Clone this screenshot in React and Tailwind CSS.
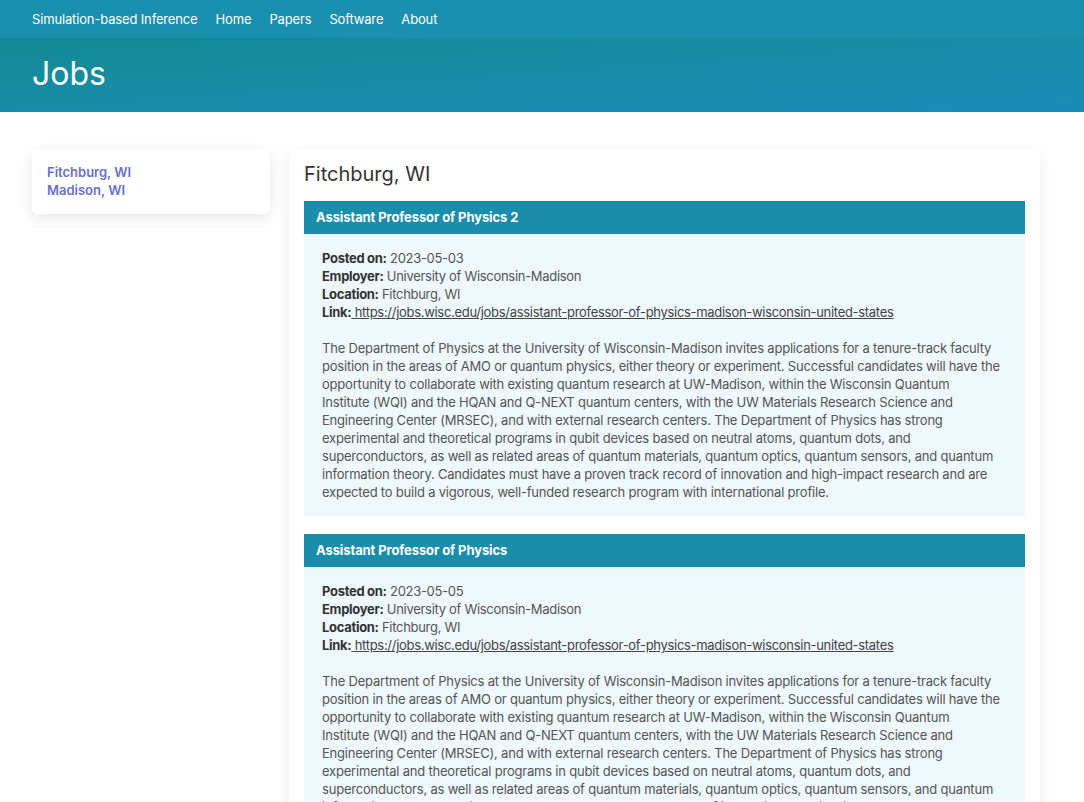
import React from 'react'

// line breaks follow the original page
const descriptionLines = [
    'The Department of Physics at the University of Wisconsin-Madison invites applications for a tenure-track faculty',
    'position in the areas of AMO or quantum physics, either theory or experiment. Successful candidates will have the',
    'opportunity to collaborate with existing quantum research at UW-Madison, within the Wisconsin Quantum',
    'Institute (WQI) and the HQAN and Q-NEXT quantum centers, with the UW Materials Research Science and',
    'Engineering Center (MRSEC), and with external research centers. The Department of Physics has strong',
    'experimental and theoretical programs in qubit devices based on neutral atoms, quantum dots, and',
    'superconductors, as well as related areas of quantum materials, quantum optics, quantum sensors, and quantum',
    'information theory. Candidates must have a proven track record of innovation and high-impact research and are',
    'expected to build a vigorous, well-funded research program with international profile.',
]

const jobs = [
    {
        title: 'Assistant Professor of Physics 2',
        posted: '2023-05-03',
        employer: 'University of Wisconsin-Madison',
        location: 'Fitchburg, WI',
        link: 'https://jobs.wisc.edu/jobs/assistant-professor-of-physics-madison-wisconsin-united-states',
    },
    {
        title: 'Assistant Professor of Physics',
        posted: '2023-05-05',
        employer: 'University of Wisconsin-Madison',
        location: 'Fitchburg, WI',
        link: 'https://jobs.wisc.edu/jobs/assistant-professor-of-physics-madison-wisconsin-united-states',
    },
]

function JobCard({ job }) {
    return (
        <div className="mb-[18px]">
            <div className="h-[33px] flex items-center px-3 bg-[#1a8dab] text-white text-[13px] font-bold tracking-[-0.1px]">
                {job.title}
            </div>
            <div className="bg-[#eef8fd] px-[18px] pt-[15px] pb-[15px] text-[13px] leading-[18px] text-[#555] tracking-[-0.3px]">
                <div>
                    <span className="font-bold text-[#333]">Posted on:</span> {job.posted}
                </div>
                <div>
                    <span className="font-bold text-[#333]">Employer:</span> {job.employer}
                </div>
                <div>
                    <span className="font-bold text-[#333]">Location:</span> {job.location}
                </div>
                <div>
                    <span className="font-bold text-[#333]">Link:</span>
                    <a href="#" className="underline text-[#444]"> {job.link}</a>
                </div>
                <p className="mt-[18px] whitespace-nowrap tracking-[-0.2px]">
                    {descriptionLines.map((line) => (
                        <span key={line} className="block">{line}</span>
                    ))}
                </p>
            </div>
        </div>
    )
}

export default function App() {
    return (
        <div className="min-h-screen bg-white font-['Inter',sans-serif]">
            <nav className="h-[38px] bg-[#1a8fae] flex items-center gap-[18px] px-8 pt-px text-[13px] text-white tracking-[-0.15px]">
                <a href="#">Simulation-based Inference</a>
                <a href="#">Home</a>
                <a href="#">Papers</a>
                <a href="#">Software</a>
                <a href="#">About</a>
            </nav>
            <header className="h-[74px] flex items-center px-8 bg-gradient-to-br from-[#128a93] via-[#188ca8] to-[#1a8bb8]">
                <h1 className="text-[32px] text-white font-normal -mt-[2px]">Jobs</h1>
            </header>

            <main className="flex items-start gap-[19px] pl-8 pt-[37px] pb-10">
                <aside className="w-[238px] shrink-0 bg-white rounded-md shadow-[0_4px_14px_rgba(0,0,0,0.1)] px-[15px] pt-[14px] pb-[15px] text-[13px] leading-[18px] font-semibold text-[#6a6fcf]">
                    <a href="#" className="block">Fitchburg, WI</a>
                    <a href="#" className="block">Madison, WI</a>
                </aside>

                <section className="w-[751px] shrink-0 bg-white rounded-md shadow-[0_4px_14px_rgba(0,0,0,0.08)] px-[15px] pt-[12px] pb-1">
                    <h2 className="text-[20px] leading-[26px] text-[#333] mb-[14px]">Fitchburg, WI</h2>
                    {jobs.map((job) => (
                        <JobCard key={job.title} job={job} />
                    ))}
                </section>
            </main>
        </div>
    )
}
